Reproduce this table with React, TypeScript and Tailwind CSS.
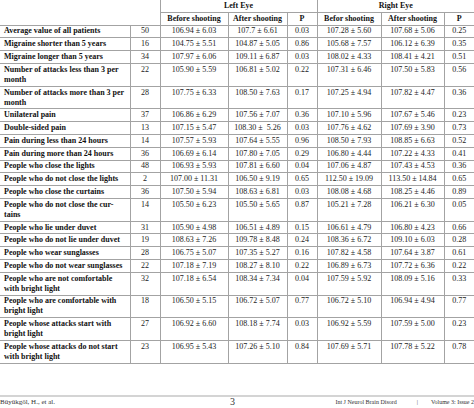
import React from 'react'

type Row = {
  label: string
  n: string
  values: string[]
}

const rows: Row[] = [
  { label: 'Average value of all patients', n: '50', values: ['106.94 ± 6.03', '107.7 ± 6.61', '0.03', '107.28 ± 5.60', '107.68 ± 5.06', '0.25'] },
  { label: 'Migraine shorter than 5 years', n: '16', values: ['104.75 ± 5.51', '104.87 ± 5.05', '0.86', '105.68 ± 7.57', '106.12 ± 6.39', '0.35'] },
  { label: 'Migraine longer than 5 years', n: '34', values: ['107.97 ± 6.06', '109.11 ± 6.87', '0.03', '108.02 ± 4.33', '108.41 ± 4.21', '0.51'] },
  { label: 'Number of attacks less than 3 per\nmonth', n: '22', values: ['105.90 ± 5.59', '106.81 ± 5.02', '0.22', '107.31 ± 6.46', '107.50 ± 5.83', '0.56'] },
  { label: 'Number of attacks more than 3 per\nmonth', n: '28', values: ['107.75 ± 6.33', '108.50 ± 7.63', '0.17', '107.25 ± 4.94', '107.82 ± 4.47', '0.36'] },
  { label: 'Unilateral pain', n: '37', values: ['106.86 ± 6.29', '107.56 ± 7.07', '0.36', '107.10 ± 5.96', '107.67 ± 5.46', '0.23'] },
  { label: 'Double-sided pain', n: '13', values: ['107.15 ± 5.47', '108.30 ±  5.26', '0.03', '107.76 ± 4.62', '107.69 ± 3.90', '0.73'] },
  { label: 'Pain during less than 24 hours', n: '14', values: ['107.57 ± 5.93', '107.64 ± 5.55', '0.96', '108.50 ± 7.93', '108.85 ± 6.63', '0.52'] },
  { label: 'Pain during more than 24 hours', n: '36', values: ['106.69 ± 6.14', '107.80 ± 7.05', '0.29', '106.80 ± 4.44', '107.22 ± 4.33', '0.41'] },
  { label: 'People who close the lights', n: '48', values: ['106.93 ± 5.93', '107.81 ± 6.60', '0.04', '107.06 ± 4.87', '107.43 ± 4.53', '0.36'] },
  { label: 'People who do not close the lights', n: '2', values: ['107.00 ± 11.31', '106.50 ± 9.19', '0.65', '112.50 ± 19.09', '113.50 ± 14.84', '0.65'] },
  { label: 'People who close the curtains', n: '36', values: ['107.50 ± 5.94', '108.63 ± 6.81', '0.03', '108.08 ± 4.68', '108.25 ± 4.46', '0.89'] },
  { label: 'People who do not close the cur-\ntains', n: '14', values: ['105.50 ± 6.23', '105.50 ± 5.65', '0.87', '105.21 ± 7.28', '106.21 ± 6.30', '0.05'] },
  { label: 'People who lie under duvet', n: '31', values: ['105.90 ± 4.98', '106.51 ± 4.89', '0.15', '106.61 ± 4.79', '106.80 ± 4.23', '0.66'] },
  { label: 'People who do not lie under duvet', n: '19', values: ['108.63 ± 7.26', '109.78 ± 8.48', '0.24', '108.36 ± 6.72', '109.10 ± 6.03', '0.28'] },
  { label: 'People who wear sunglasses', n: '28', values: ['106.75 ± 5.07', '107.35 ± 5.27', '0.16', '107.82 ± 4.58', '107.64 ± 3.87', '0.61'] },
  { label: 'People who do not wear sunglasses', n: '22', values: ['107.18 ± 7.19', '108.27 ± 8.10', '0.22', '106.89 ± 6.73', '107.72 ± 6.36', '0.22'] },
  { label: 'People who are not comfortable\nwith bright light', n: '32', values: ['107.18 ± 6.54', '108.34 ± 7.34', '0.04', '107.59 ± 5.92', '108.09 ± 5.16', '0.33'] },
  { label: 'People who are comfortable with\nbright light', n: '18', values: ['106.50 ± 5.15', '106.72 ± 5.07', '0.77', '106.72 ± 5.10', '106.94 ± 4.94', '0.77'] },
  { label: 'People whose attacks start with\nbright light', n: '27', values: ['106.92 ± 6.60', '108.18 ± 7.74', '0.03', '106.92 ± 5.59', '107.59 ± 5.00', '0.23'] },
  { label: 'People whose attacks do not start\nwith bright light', n: '23', values: ['106.95 ± 5.43', '107.26 ± 5.10', '0.84', '107.69 ± 5.71', '107.78 ± 5.22', '0.78'] },
]

const cell = 'border border-[#a3a3a3] px-0 py-[0.9px] align-top text-center whitespace-pre text-[#222]'

export default function App() {
  return (
    <div className="w-[474px] h-[408px] overflow-hidden bg-white text-[#111] [font-family:'Liberation_Serif',serif] text-[8px] leading-[10px]">
      <table className="w-[474px] table-fixed border-collapse">
        <colgroup>
          <col className="w-[130px]" />
          <col className="w-[30px]" />
          <col className="w-[68px]" />
          <col className="w-[59px]" />
          <col className="w-[30px]" />
          <col className="w-[64px]" />
          <col className="w-[63px]" />
          <col className="w-[30px]" />
        </colgroup>
        <thead>
          <tr className="h-[12px]">
            <th colSpan={2} rowSpan={2} className="border-b border-[#a3a3a3]" />
            <th colSpan={3} className="border-l border-r border-b border-[#a3a3a3] font-bold text-center py-0">
              Left Eye
            </th>
            <th colSpan={3} className="border-l border-b border-[#a3a3a3] font-bold text-center py-0">
              Right Eye
            </th>
          </tr>
          <tr className="h-[13px]">
            <th className="border border-[#a3a3a3] font-bold py-0">Before shooting</th>
            <th className="border border-[#a3a3a3] font-bold py-0">After shooting</th>
            <th className="border border-[#a3a3a3] font-bold py-0">P</th>
            <th className="border border-[#a3a3a3] font-bold py-0">Befor shooting</th>
            <th className="border border-[#a3a3a3] font-bold py-0">After shooting</th>
            <th className="border-b border-l border-[#a3a3a3] font-bold py-0">P</th>
          </tr>
        </thead>
        <tbody>
          {rows.map((row) => (
            <tr key={row.label}>
              <td className="border-y border-r border-[#a3a3a3] pl-[4px] py-[0.9px] align-top font-bold whitespace-pre">
                {row.label}
              </td>
              <td className={cell}>{row.n}</td>
              {row.values.map((v, i) => (
                <td key={i} className={`${cell} ${i === 5 ? 'border-r-0' : ''}`}>
                  {v}
                </td>
              ))}
            </tr>
          ))}
        </tbody>
      </table>

      {/* page footer */}
      <div className="mt-[31px] border-t-2 border-[#d4d4d4] flex items-start text-[#333]">
        <span className="w-[230px] text-[7px] leading-[10px]">Büyükgöl, H., et al.</span>
        <span className="text-[10px] leading-[10px]">3</span>
        <span className="ml-auto text-[6px] leading-[10px]">Int J Neurol Brain Disord</span>
        <span className="ml-[20px] mr-[13px] text-[6px] leading-[10px]">|</span>
        <span className="text-[6px] leading-[10px]">Volume 3: Issue 2</span>
      </div>
    </div>
  )
}
